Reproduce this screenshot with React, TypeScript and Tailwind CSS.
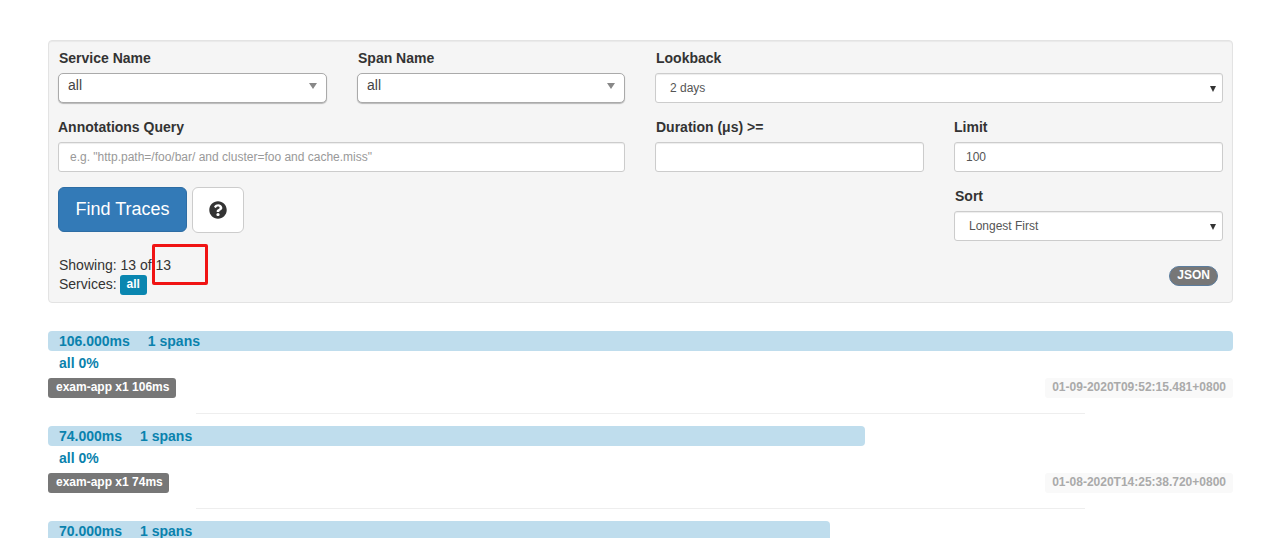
import { FaQuestionCircle } from 'react-icons/fa'

const FONT = "font-['Liberation_Sans',Arial,sans-serif]"

const TRACES = [
  { duration: '106.000ms', width: 'w-full', badge: 'exam-app x1 106ms', time: '01-09-2020T09:52:15.481+0800' },
  { duration: '74.000ms', width: 'w-[817px]', badge: 'exam-app x1 74ms', time: '01-08-2020T14:25:38.720+0800' },
  { duration: '70.000ms', width: 'w-[782px]', badge: 'exam-app x1 70ms', time: '01-08-2020T14:25:38.100+0800' },
]

function Label({ text, indent }: { text: string; indent?: boolean }) {
  return (
    <label className={`block h-5 mb-[5px] text-sm leading-5 font-bold text-[#333] ${indent ? 'pl-px' : ''}`}>
      {text}
    </label>
  )
}

function ChosenSelect({ label }: { label: string }) {
  return (
    <div>
      <Label text={label} indent />
      <div className="relative h-[30px] pl-[9px] bg-white border border-[#aaa] rounded-[5px] shadow-[0_1px_1px_rgba(0,0,0,0.25)] text-sm leading-[23px] text-[#444]">
        all
        <span className="absolute right-[9px] top-[9px] w-0 h-0 border-x-[4px] border-x-transparent border-t-[6px] border-t-[#888]" />
      </div>
    </div>
  )
}

function PlainSelect({ label, value }: { label: string; value: string }) {
  return (
    <div>
      <Label text={label} indent />
      <div className="relative h-[30px] pl-[14px] bg-white border border-[#ccc] rounded-[3px] shadow-[inset_0_1px_1px_rgba(0,0,0,0.075)] text-xs leading-[28px] text-[#555]">
        {value}
        <span className="absolute right-[6px] top-[12px] w-0 h-0 border-x-[3.5px] border-x-transparent border-t-[6px] border-t-[#333]" />
      </div>
    </div>
  )
}

function TextInput({ value, placeholder }: { value?: string; placeholder?: string }) {
  return (
    <input
      readOnly
      value={value ?? ''}
      placeholder={placeholder}
      className="block w-full h-[30px] px-[11px] bg-white border border-[#ccc] rounded-[3px] shadow-[inset_0_1px_1px_rgba(0,0,0,0.075)] text-xs text-[#555] placeholder:text-[#999] outline-none"
    />
  )
}

function TraceRow({ trace, last }: { trace: (typeof TRACES)[number]; last: boolean }) {
  return (
    <div>
      <div className={`h-5 ${trace.width} pl-[11px] bg-[#bfdded] rounded-[4px] text-sm leading-5 font-bold text-[#0a82ad]`}>
        <span>{trace.duration}</span>
        <span className="ml-[18px]">1 spans</span>
      </div>
      <div className="h-[27px] pl-[11px] text-sm leading-[25px] font-bold text-[#0a82ad]">all 0%</div>
      <div className="flex justify-between">
        <span className="h-5 pl-2 pr-[6.5px] bg-[#777] rounded-[3px] text-xs leading-[18px] font-bold text-white">{trace.badge}</span>
        <span className="h-5 px-[7px] bg-[#f9f9f9] rounded-[3px] text-xs leading-[18px] font-bold text-[#aaa]">{trace.time}</span>
      </div>
      {!last && <hr className="w-3/4 mx-auto mt-[15px] mb-3 border-t border-[#eee]" />}
    </div>
  )
}

export default function App() {
  return (
    <div className={`relative h-screen overflow-hidden bg-white pl-12 pr-[30px] pt-10 ${FONT}`}>
      <div className="pt-[7px] px-[9px] h-[263px] bg-[#f5f5f5] border border-[#e3e3e3] rounded-[4px] shadow-[inset_0_1px_1px_rgba(0,0,0,0.05)]">
        <div className="grid grid-cols-[269px_268px_269px_269px] gap-x-[30px] gap-y-[14px]">
          <ChosenSelect label="Service Name" />
          <ChosenSelect label="Span Name" />
          <div className="col-span-2">
            <PlainSelect label="Lookback" value="2 days" />
          </div>

          <div className="col-span-2">
            <Label text="Annotations Query" />
            <TextInput placeholder={'e.g. "http.path=/foo/bar/ and cluster=foo and cache.miss"'} />
          </div>
          <div>
            <Label text="Duration (μs) >=" indent />
            <TextInput />
          </div>
          <div>
            <Label text="Limit" />
            <TextInput value="100" />
          </div>

          <div className="col-span-3 flex items-start gap-[5px] pt-px">
            <button className="w-[129px] h-[45px] pb-[2px] bg-[#337ab7] border border-[#2e6da4] rounded-[6px] text-lg text-white">
              Find Traces
            </button>
            <button className="flex items-center justify-center w-[52px] h-[46px] bg-white border border-[#ccc] rounded-[6px] text-[#333]">
              <FaQuestionCircle size={18} />
            </button>
          </div>
          <PlainSelect label="Sort" value="Longest First" />
        </div>

        <div className="flex justify-between mt-[15px]">
          <div className="pl-px text-sm leading-[19px] text-[#333]">
            <div>Showing: 13 of 13</div>
            <div className="flex items-start">
              Services:
              <span className="ml-[3px] h-5 px-[7px] bg-[#0a86b0] rounded-[3px] text-xs leading-[18px] font-bold text-white">all</span>
            </div>
          </div>
          <span className="mt-[10px] mr-[5px] h-5 px-[7px] bg-[#777] border border-[#5b7d9e] rounded-full text-xs leading-[17px] font-bold text-white">
            JSON
          </span>
        </div>
      </div>

      <div className="mt-7">
        {TRACES.map((trace, i) => (
          <TraceRow key={trace.duration} trace={trace} last={i === TRACES.length - 1} />
        ))}
      </div>

      <div className="absolute left-[152px] top-[244px] w-[56px] h-[41px] border-[3px] border-[#f01414] rounded-[2px]" />
    </div>
  )
}
